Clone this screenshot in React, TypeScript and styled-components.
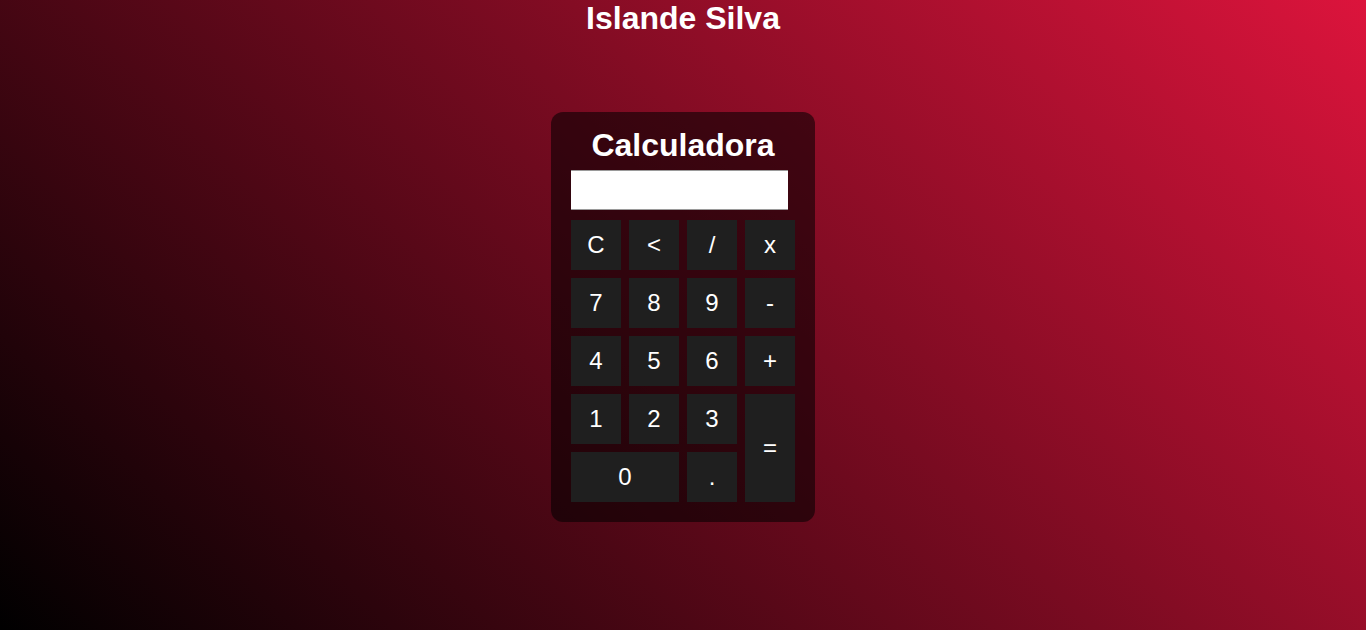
import React, { useState } from "react";
import styled, { createGlobalStyle } from "styled-components";

const Global = createGlobalStyle`
  html, body { margin: 0; padding: 0; }
  body {
    min-height: 100vh;
    background: linear-gradient(45deg, #000000, #dc143c);
    font-family: "Liberation Sans", Arial, sans-serif;
    color: #fff;
  }
`;

const Page = styled.div`
  display: flex;
  flex-direction: column;
  align-items: center;
  min-height: 100vh;
`;

const Heading = styled.h1`
  margin: 0;
  font-size: 32px;
  line-height: 37px;
  font-weight: 700;
  text-align: center;
`;

const Panel = styled.div`
  margin-top: 75px;
  width: 224px;
  padding: 15px 20px 20px;
  border-radius: 12px;
  background: rgba(0, 0, 0, 0.55);
  display: flex;
  flex-direction: column;
  align-items: flex-start;
`;

const Title = styled.h2`
  margin: 0 0 6px;
  align-self: stretch;
  font-size: 32px;
  line-height: 37px;
  font-weight: 700;
  text-align: center;
`;

const Display = styled.input`
  box-sizing: border-box;
  width: 217px;
  height: 40px;
  margin: 0 0 10px;
  padding: 0 8px;
  border: none;
  border-top: 1px solid #9a9a9a;
  border-bottom: 1px solid #9a9a9a;
  background: #fff;
  font-family: "Liberation Sans", Arial, sans-serif;
  font-size: 22px;
  text-align: right;
  outline: none;
`;

const Keys = styled.div`
  display: grid;
  grid-template-columns: repeat(4, 50px);
  grid-auto-rows: 50px;
  gap: 8px;
`;

const Key = styled.button<{ $cols?: number; $rows?: number }>`
  grid-column: span ${(p) => p.$cols ?? 1};
  grid-row: span ${(p) => p.$rows ?? 1};
  border: none;
  padding: 0;
  background: #1f1f1f;
  color: #fff;
  font-family: "Liberation Sans", Arial, sans-serif;
  font-size: 24px;
  cursor: pointer;
`;

type K = { label: string; cols?: number; rows?: number };

const keys: K[] = [
  { label: "C" }, { label: "<" }, { label: "/" }, { label: "x" },
  { label: "7" }, { label: "8" }, { label: "9" }, { label: "-" },
  { label: "4" }, { label: "5" }, { label: "6" }, { label: "+" },
  { label: "1" }, { label: "2" }, { label: "3" }, { label: "=", rows: 2 },
  { label: "0", cols: 2 }, { label: "." },
];

export default function App() {
  const [value, setValue] = useState("");
  const press = (k: string) => {
    if (k === "C") return setValue("");
    if (k === "<") return setValue((v) => v.slice(0, -1));
    if (k === "=") {
      try {
        // eslint-disable-next-line no-new-func
        const r = Function(`return (${value.replace(/x/g, "*")})`)();
        setValue(String(r));
      } catch {
        setValue("Erro");
      }
      return;
    }
    setValue((v) => v + k);
  };
  return (
    <Page>
      <Global />
      <Heading>Islande Silva</Heading>
      <Panel>
        <Title>Calculadora</Title>
        <Display value={value} readOnly />
        <Keys>
          {keys.map((k) => (
            <Key key={k.label} $cols={k.cols} $rows={k.rows} onClick={() => press(k.label)}>
              {k.label}
            </Key>
          ))}
        </Keys>
      </Panel>
    </Page>
  );
}
